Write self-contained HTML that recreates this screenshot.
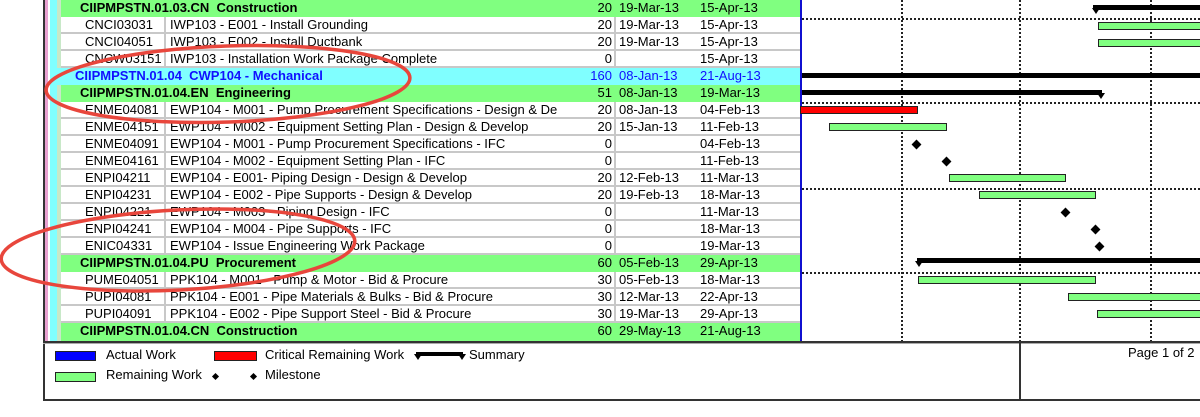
<!DOCTYPE html>
<html><head><meta charset="utf-8"><style>
body{margin:0;width:1200px;height:417px;background:#fff;position:relative;overflow:hidden;font-family:"Liberation Sans",Arial,sans-serif;font-size:13px;color:#000}
.a{position:absolute}
.row{position:absolute;left:61px;width:739px;height:17px;box-sizing:border-box;border-bottom:2px solid #c8c8c8;background:#fff}
.row span{position:absolute;top:0px;white-space:nowrap;line-height:16px}
.g{background:#80ff80;border-bottom:none}
.c{background:#80ffff;border-bottom:none;color:#1010ff}
.b span{font-weight:bold}
.code{left:24px}.desc{left:109px}.dur{right:188px;text-align:right}.st{left:558px}.fi{left:639px}
.bar{position:absolute;height:8px;background:#80ff80;border:1.5px solid #222;box-sizing:border-box}
.sum{position:absolute;height:5px;background:#000}
.dia{position:absolute;width:7px;height:7px;background:#000;transform:rotate(45deg)}
.vd{position:absolute;top:0;height:342px;border-left:2px dotted #222}
.hd{position:absolute;left:802px;right:0;border-top:2px dotted #222}
</style></head><body>
<div class="a" style="left:43px;top:0;width:2px;height:400px;background:#333"></div>
<div class="a" style="left:45px;top:0;width:3px;height:342px;background:#e8a0d0"></div>
<div class="a" style="left:50px;top:0;width:7px;height:342px;background:#80ffff"></div>
<div class="a" style="left:57px;top:0;width:4px;height:342px;background:#c8e8c8"></div>

<div class="row g b" style="top:0"><span class="code" style="left:19px">CIIPMPSTN.01.03.CN&nbsp; Construction</span><span class="dur" style="font-weight:normal">20</span><span class="st" style="font-weight:normal">19-Mar-13</span><span class="fi" style="font-weight:normal">15-Apr-13</span></div>
<div class="row" style="top:17px"><span class="code">CNCI03031</span><span class="desc">IWP103 - E001 - Install Grounding</span><span class="dur">20</span><span class="st">19-Mar-13</span><span class="fi">15-Apr-13</span></div>
<div class="row" style="top:34px"><span class="code">CNCI04051</span><span class="desc">IWP103 - E002 - Install Ductbank</span><span class="dur">20</span><span class="st">19-Mar-13</span><span class="fi">15-Apr-13</span></div>
<div class="row" style="top:51px"><span class="code">CNCW03151</span><span class="desc">IWP103 - Installation Work Package Complete</span><span class="dur">0</span><span class="fi">15-Apr-13</span></div>
<div class="row c b" style="top:68px;left:57px;width:743px"><span class="code" style="left:18px">CIIPMPSTN.01.04&nbsp; CWP104 - Mechanical</span><span class="dur" style="font-weight:normal">160</span><span class="st" style="font-weight:normal;left:562px">08-Jan-13</span><span class="fi" style="font-weight:normal;left:643px">21-Aug-13</span></div>
<div class="row g b" style="top:85px"><span class="code" style="left:19px">CIIPMPSTN.01.04.EN&nbsp; Engineering</span><span class="dur" style="font-weight:normal">51</span><span class="st" style="font-weight:normal">08-Jan-13</span><span class="fi" style="font-weight:normal">19-Mar-13</span></div>
<div class="row" style="top:102px"><span class="code">ENME04081</span><span class="desc">EWP104 - M001 - Pump Procurement Specifications - Design &amp; De</span><span class="dur">20</span><span class="st">08-Jan-13</span><span class="fi">04-Feb-13</span></div>
<div class="row" style="top:119px"><span class="code">ENME04151</span><span class="desc">EWP104 - M002 - Equipment Setting Plan - Design &amp; Develop</span><span class="dur">20</span><span class="st">15-Jan-13</span><span class="fi">11-Feb-13</span></div>
<div class="row" style="top:136px"><span class="code">ENME04091</span><span class="desc">EWP104 - M001 - Pump Procurement Specifications - IFC</span><span class="dur">0</span><span class="fi">04-Feb-13</span></div>
<div class="row" style="top:153px"><span class="code">ENME04161</span><span class="desc">EWP104 - M002 - Equipment Setting Plan - IFC</span><span class="dur">0</span><span class="fi">11-Feb-13</span></div>
<div class="row" style="top:170px"><span class="code">ENPI04211</span><span class="desc">EWP104 - E001- Piping Design - Design &amp; Develop</span><span class="dur">20</span><span class="st">12-Feb-13</span><span class="fi">11-Mar-13</span></div>
<div class="row" style="top:187px"><span class="code">ENPI04231</span><span class="desc">EWP104 - E002 - Pipe Supports - Design &amp; Develop</span><span class="dur">20</span><span class="st">19-Feb-13</span><span class="fi">18-Mar-13</span></div>
<div class="row" style="top:204px"><span class="code">ENPI04221</span><span class="desc">EWP104 - M003 - Piping Design - IFC</span><span class="dur">0</span><span class="fi">11-Mar-13</span></div>
<div class="row" style="top:221px"><span class="code">ENPI04241</span><span class="desc">EWP104 - M004 - Pipe Supports - IFC</span><span class="dur">0</span><span class="fi">18-Mar-13</span></div>
<div class="row" style="top:238px"><span class="code">ENIC04331</span><span class="desc">EWP104 - Issue Engineering Work Package</span><span class="dur">0</span><span class="fi">19-Mar-13</span></div>
<div class="row g b" style="top:255px"><span class="code" style="left:19px">CIIPMPSTN.01.04.PU&nbsp; Procurement</span><span class="dur" style="font-weight:normal">60</span><span class="st" style="font-weight:normal">05-Feb-13</span><span class="fi" style="font-weight:normal">29-Apr-13</span></div>
<div class="row" style="top:272px"><span class="code">PUME04051</span><span class="desc">PPK104 - M001 - Pump &amp; Motor - Bid &amp; Procure</span><span class="dur">30</span><span class="st">05-Feb-13</span><span class="fi">18-Mar-13</span></div>
<div class="row" style="top:289px"><span class="code">PUPI04081</span><span class="desc">PPK104 - E001 - Pipe Materials &amp; Bulks - Bid &amp; Procure</span><span class="dur">30</span><span class="st">12-Mar-13</span><span class="fi">22-Apr-13</span></div>
<div class="row" style="top:306px"><span class="code">PUPI04091</span><span class="desc">PPK104 - E002 - Pipe Support Steel - Bid &amp; Procure</span><span class="dur">30</span><span class="st">19-Mar-13</span><span class="fi">29-Apr-13</span></div>
<div class="row g b" style="top:323px;height:19px"><span class="code" style="left:19px">CIIPMPSTN.01.04.CN&nbsp; Construction</span><span class="dur" style="font-weight:normal">60</span><span class="st" style="font-weight:normal">29-May-13</span><span class="fi" style="font-weight:normal">21-Aug-13</span></div>

<div class="a" style="left:164px;top:17px;width:2px;height:51px;background:#c8c8c8"></div>
<div class="a" style="left:164px;top:102px;width:2px;height:153px;background:#c8c8c8"></div>
<div class="a" style="left:164px;top:272px;width:2px;height:51px;background:#c8c8c8"></div>
<div class="a" style="left:614px;top:17px;width:2px;height:51px;background:#c8c8c8"></div>
<div class="a" style="left:614px;top:102px;width:2px;height:153px;background:#c8c8c8"></div>
<div class="a" style="left:614px;top:272px;width:2px;height:51px;background:#c8c8c8"></div>

<div class="a" style="left:800px;top:0;width:2px;height:342px;background:#1010d0"></div>

<div class="vd" style="left:901px"></div>
<div class="vd" style="left:1019px"></div>
<div class="vd" style="left:1150px"></div>
<div class="hd" style="top:18px"></div>
<div class="hd" style="top:102px"></div>
<div class="hd" style="top:188px"></div>
<div class="hd" style="top:272px"></div>

<div class="sum" style="left:1093px;width:107px;top:5px"></div>
<div class="a" style="left:1092px;top:8px;border-left:4px solid transparent;border-right:4px solid transparent;border-top:6px solid #000"></div>
<div class="bar" style="left:1098px;width:104px;top:22px"></div>
<div class="bar" style="left:1098px;width:104px;top:39px"></div>
<div class="sum" style="left:802px;width:398px;top:73px"></div>
<div class="sum" style="left:802px;width:300px;top:90px"></div>
<div class="a" style="left:1097px;top:93px;border-left:4px solid transparent;border-right:4px solid transparent;border-top:6px solid #000"></div>
<div class="bar" style="left:800px;width:118px;top:106px;background:#ff0000"></div>
<div class="bar" style="left:829px;width:118px;top:123px"></div>
<div class="dia" style="left:913px;top:141px"></div>
<div class="dia" style="left:943px;top:158px"></div>
<div class="bar" style="left:949px;width:117px;top:174px"></div>
<div class="bar" style="left:979px;width:117px;top:191px"></div>
<div class="dia" style="left:1062px;top:209px"></div>
<div class="dia" style="left:1092px;top:226px"></div>
<div class="dia" style="left:1096px;top:243px"></div>
<div class="sum" style="left:917px;width:283px;top:258px"></div>
<div class="a" style="left:915px;top:261px;border-left:4px solid transparent;border-right:4px solid transparent;border-top:6px solid #000"></div>
<div class="bar" style="left:918px;width:178px;top:276px"></div>
<div class="bar" style="left:1068px;width:134px;top:293px"></div>
<div class="bar" style="left:1097px;width:105px;top:310px"></div>

<div class="a" style="left:43px;top:341px;width:1157px;height:2px;background:#333"></div>
<div class="a" style="left:43px;top:343px;width:1157px;height:1px;background:#aaa"></div>
<div class="a" style="left:43px;top:399px;width:1157px;height:2px;background:#333"></div>
<div class="a" style="left:1019px;top:342px;width:2px;height:58px;background:#333"></div>
<div class="a" style="left:55px;top:351px;width:41px;height:10px;background:#0000ff;border:1.5px solid #222;box-sizing:border-box"></div>
<div class="a" style="left:106px;top:347px">Actual Work</div>
<div class="a" style="left:214px;top:351px;width:43px;height:10px;background:#ff0000;border:1.5px solid #222;box-sizing:border-box"></div>
<div class="a" style="left:265px;top:347px">Critical Remaining Work</div>
<div class="a" style="left:416px;top:352px;width:47px;height:4px;background:#000"></div>
<div class="a" style="left:414px;top:354px;border-left:4px solid transparent;border-right:4px solid transparent;border-top:6px solid #000"></div>
<div class="a" style="left:458px;top:354px;border-left:4px solid transparent;border-right:4px solid transparent;border-top:6px solid #000"></div>
<div class="a" style="left:469px;top:347px">Summary</div>
<div class="a" style="left:55px;top:372px;width:41px;height:10px;background:#80ff80;border:1.5px solid #222;box-sizing:border-box"></div>
<div class="a" style="left:106px;top:367px">Remaining Work</div>
<div class="dia" style="left:213px;top:374px;width:5px;height:5px"></div>
<div class="dia" style="left:251px;top:374px;width:5px;height:5px"></div>
<div class="a" style="left:265px;top:367px">Milestone</div>
<div class="a" style="left:1128px;top:345px">Page 1 of 2</div>

<svg class="a" style="left:0;top:0" width="1200" height="417">
<ellipse cx="228" cy="84" rx="182" ry="38" transform="rotate(-2 228 84)" fill="none" stroke="#e8463c" stroke-width="3.5"/>
<ellipse cx="178" cy="250" rx="177" ry="40" transform="rotate(-3 178 250)" fill="none" stroke="#e8463c" stroke-width="3.5"/>
</svg>
</body></html>
